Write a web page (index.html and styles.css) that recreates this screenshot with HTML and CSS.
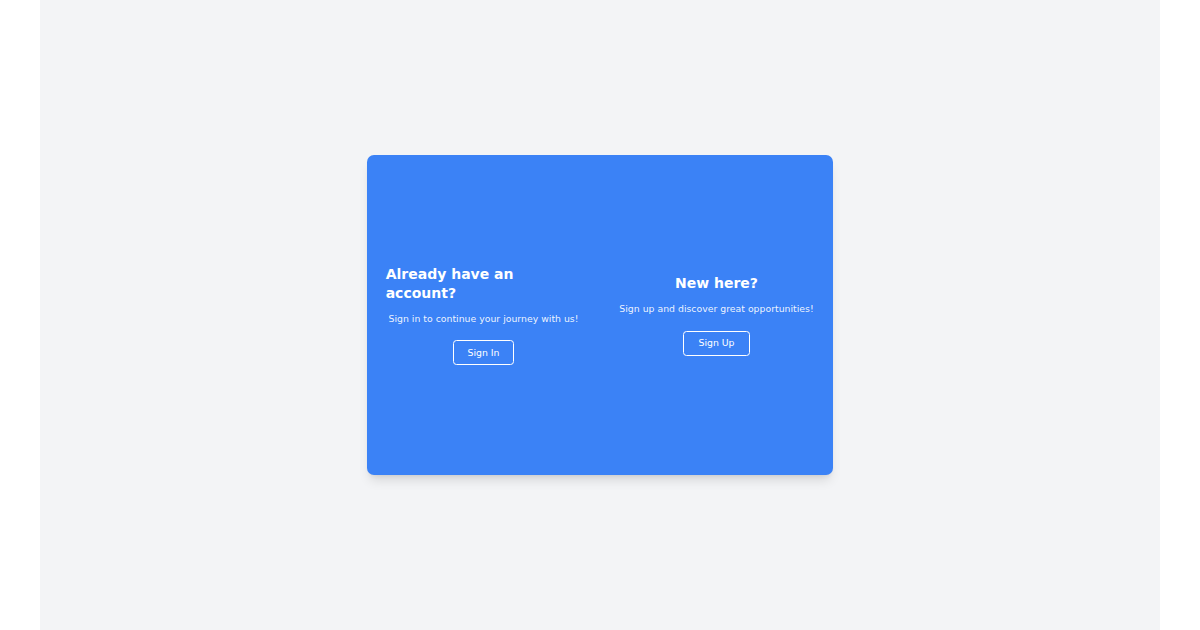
FILE: index.html
```html
<!DOCTYPE html>
<html lang="en">
<head>
<meta charset="utf-8">
<title>Auth</title>
<link rel="stylesheet" href="styles.css">
</head>
<body>
<main class="page">
  <section class="card">
    <div class="panel">
      <h1 class="title">Already have an account?</h1>
      <p class="text">Sign in to continue your journey with us!</p>
      <button class="btn" type="button">Sign In</button>
    </div>
    <div class="panel">
      <h1 class="title">New here?</h1>
      <p class="text">Sign up and discover great opportunities!</p>
      <button class="btn" type="button">Sign Up</button>
    </div>
  </section>
</main>
</body>
</html>
```

FILE: styles.css
```css
* { box-sizing: border-box; }
html, body { margin: 0; padding: 0; background: #ffffff; }
body { font-family: "DejaVu Sans", Verdana, sans-serif; }
.page {
  width: 1120px;
  height: 630px;
  margin: 0 auto;
  background: #f3f4f6;
  display: flex;
  align-items: center;
  justify-content: center;
}
.card {
  width: 466px;
  height: 320px;
  background: #3b82f6;
  border-radius: 7px;
  display: flex;
  box-shadow: 0 8px 12px -3px rgba(0,0,0,0.12), 0 3px 5px -3px rgba(0,0,0,0.1);
}
.panel {
  flex: 1 1 0;
  padding: 18.67px;
  display: flex;
  flex-direction: column;
  align-items: center;
  justify-content: center;
  color: #ffffff;
}
.title {
  margin: 0 0 9.33px 0;
  font-size: 14px;
  line-height: 18.67px;
  font-weight: bold;
  text-align: left;
}
.text {
  margin: 0 0 14.5px 0;
  font-size: 9.33px;
  line-height: 14px;
  text-align: center;
  color: rgba(255,255,255,0.92);
}
.btn {
  font-family: inherit;
  font-size: 9.33px;
  line-height: 14px;
  color: #ffffff;
  background: transparent;
  border: 1.17px solid #ffffff;
  border-radius: 3.5px;
  padding: 4.4px 14px;
  height: 25px;
  cursor: pointer;
}
```
